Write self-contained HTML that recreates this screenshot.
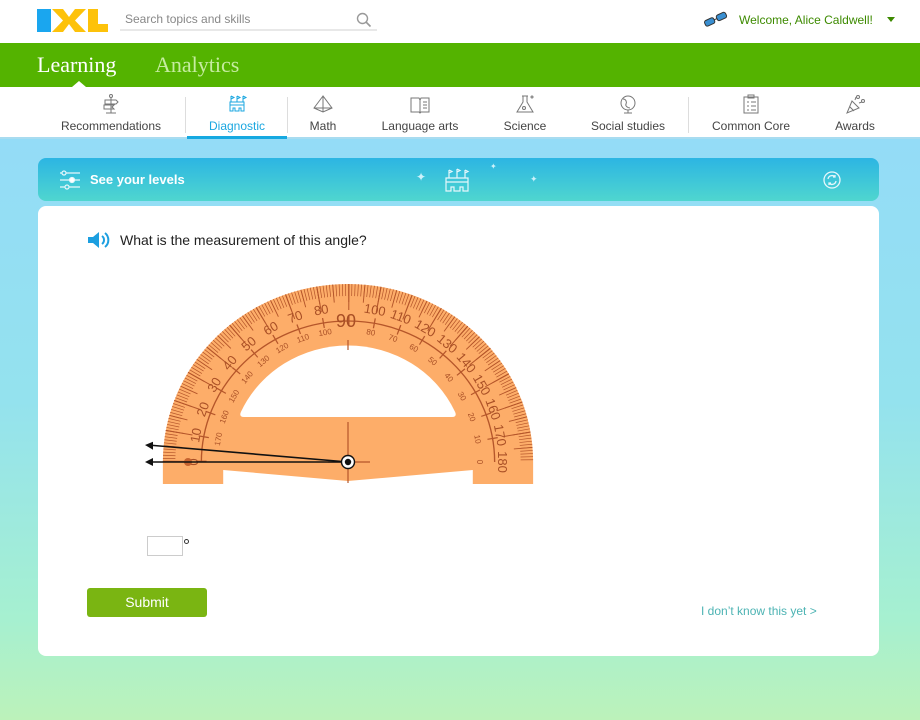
<!DOCTYPE html>
<html><head><meta charset="utf-8"><style>
*{margin:0;padding:0;box-sizing:border-box}
body{width:920px;height:720px;overflow:hidden;font-family:"Liberation Sans","DejaVu Sans",sans-serif;background:linear-gradient(#94dcf7 140px,#94e2ee 400px,#a6f0d0 620px,#bcf2ba 720px);position:relative}
.hdr{position:absolute;left:0;top:0;width:920px;height:43px;background:#fff}
.green{position:absolute;left:0;top:43px;width:920px;height:44px;background:#54b300}
.green span{position:absolute;top:9px;font-family:"Liberation Serif","DejaVu Serif",serif;font-size:22px}
.nav{position:absolute;left:0;top:87px;width:920px;height:52px;background:#fff;border-bottom:2px solid #a9dcf0}
.ni{position:absolute;top:32px;font-size:12px;color:#444;transform:translateX(-50%);white-space:nowrap}
.ic{position:absolute;top:7px;transform:translateX(-50%)}
.sep{position:absolute;top:10px;width:1px;height:36px;background:#ddd}
.banner{position:absolute;left:38px;top:158px;width:841px;height:43px;border-radius:8px;background:linear-gradient(#2cb5e3,#4fd6cf)}
.card{position:absolute;left:38px;top:206px;width:841px;height:450px;border-radius:8px;background:#fff}
</style></head><body>
<div class="hdr">
 <div style="position:absolute;left:37px;top:9px;width:14px;height:23px;background:#1aa6ef"></div>
 <svg style="position:absolute;left:50px;top:9px" width="58" height="23"><path d="M2 0h11l6 8 6-8h11L25 11.5 36 23H25l-6-8-6 8H2l11-11.5z" fill="#fdc20a"/><path d="M38 0h10v15h10v8H38z" fill="#fdc20a"/></svg>
 <div style="position:absolute;left:120px;top:9px;width:257px;height:22px;border-bottom:2px solid #e8e8e8;font-size:12px;color:#888;padding-left:5px;line-height:20px">Search topics and skills
  <svg style="position:absolute;right:5px;top:3px" width="16" height="16"><circle cx="6.5" cy="6.5" r="5" fill="none" stroke="#999" stroke-width="1.4"/><line x1="10" y1="10" x2="14.5" y2="14.5" stroke="#999" stroke-width="1.6"/></svg></div>
 <svg style="position:absolute;left:703px;top:10px" width="26" height="18"><g transform="rotate(-25 13 9)"><rect x="1" y="6" width="10" height="6" rx="2" fill="#3a8fd1" stroke="#333"/><rect x="14" y="6" width="10" height="6" rx="2" fill="#3a8fd1" stroke="#333"/><line x1="11" y1="9" x2="14" y2="9" stroke="#333"/></g></svg>
 <div style="position:absolute;left:739px;top:13px;font-size:12px;color:#3d8a00">Welcome, Alice Caldwell!</div>
 <div style="position:absolute;left:887px;top:17px;border-left:4px solid transparent;border-right:4px solid transparent;border-top:5px solid #3d8a00"></div>
</div>
<div class="green"><span style="left:37px;color:#fff">Learning</span><span style="left:155px;color:#c6eca0">Analytics</span>
 <div style="position:absolute;left:72px;top:38px;border-left:7px solid transparent;border-right:7px solid transparent;border-bottom:6px solid #fff"></div></div>
<div class="nav">
 <div class="sep" style="left:185px"></div><div class="sep" style="left:287px"></div><div class="sep" style="left:688px"></div>
 <svg class="ic" style="left:111px" width="22" height="20" fill="none" stroke="#777"><circle cx="11" cy="2" r="1.5"/><path d="M11 4v15M5 6h11l2 2-2 2H5zM4 11h10l-2 2 2 2H4z"/><path d="M6 19h10"/></svg>
 <svg class="ic" style="left:237px" width="22" height="20" fill="none" stroke="#1ba7e0"><path d="M4 8h14v9h-3v-3h-2v3h-4v-3H7v3H4zM4 11h14M5 2v6M11 2v6M17 2v6M5 2l3 1.5-3 1.5M11 2l3 1.5-3 1.5M17 2l3 1.5-3 1.5"/></svg>
 <svg class="ic" style="left:323px" width="22" height="20" fill="none" stroke="#777"><path d="M11 2L2 14l9 4 9-4zM11 2v16M2 14h18"/></svg>
 <svg class="ic" style="left:420px" width="22" height="20" fill="none" stroke="#777"><path d="M2 4h8l1 2 1-2h8v14h-8l-1 1-1-1H2zM11 6v13M14 8h4M14 11h4M14 14h4"/></svg>
 <svg class="ic" style="left:525px" width="22" height="20" fill="none" stroke="#777"><path d="M8 2h6M9 2v6L3 18h16L13 8V2"/><circle cx="10" cy="14" r="1.5"/><circle cx="18" cy="3" r="1"/></svg>
 <svg class="ic" style="left:628px" width="22" height="20" fill="none" stroke="#777"><circle cx="11" cy="9" r="7"/><path d="M6 5c3 0 4 3 3 5s2 4 4 4M11 16v3M7 19h8"/></svg>
 <svg class="ic" style="left:751px" width="22" height="20" fill="none" stroke="#777"><rect x="4" y="3" width="14" height="16"/><rect x="8" y="1" width="6" height="3"/><path d="M7 8h2M11 8h5M7 12h2M11 12h5M7 16h2M11 16h5"/></svg>
 <svg class="ic" style="left:855px" width="22" height="20" fill="none" stroke="#777"><path d="M3 19l5-12 7 7zM6 13l4 4"/><circle cx="14" cy="3" r="1.5"/><circle cx="19" cy="7" r="1.5"/><path d="M11 6l1-3M15 9l3-1"/></svg>
 <div class="ni" style="left:111px">Recommendations</div>
 <div class="ni" style="left:237px;color:#1ba7e0">Diagnostic</div>
 <div class="ni" style="left:323px">Math</div>
 <div class="ni" style="left:420px">Language arts</div>
 <div class="ni" style="left:525px">Science</div>
 <div class="ni" style="left:628px">Social studies</div>
 <div class="ni" style="left:751px">Common Core</div>
 <div class="ni" style="left:855px">Awards</div>
 <div style="position:absolute;left:187px;top:49px;width:100px;height:3px;background:#16a9e1"></div>
</div>
<div class="banner">
 <svg style="position:absolute;left:21px;top:12px" width="22" height="20" fill="none" stroke="#e6f7fb" stroke-width="1.2"><path d="M1 3h20M1 10h20M1 17h20"/><circle cx="5" cy="3" r="2" fill="#3ac0df"/><circle cx="13" cy="10" r="2.5" fill="#fff"/><circle cx="8" cy="17" r="2" fill="#46cbd9"/></svg>
 <div style="position:absolute;left:52px;top:14px;color:#fff;font-size:13px;font-weight:bold">See your levels</div>
 <div style="position:absolute;left:378px;top:12px;color:#cdf2fb;font-size:12px">✦</div>
 <div style="position:absolute;left:452px;top:4px;color:#cdf2fb;font-size:8px">✦</div>
 <div style="position:absolute;left:492px;top:16px;color:#cdf2fb;font-size:9px">✦</div>
 <svg style="position:absolute;left:406px;top:8px" width="26" height="28" fill="none" stroke="#e6f7fb" stroke-width="1.2"><path d="M2 12h22v13h-5v-4h-3v4h-6v-4H7v4H2zM2 16h22M5 4v8M13 3v9M21 4v8M5 4l3 1.5-3 1.5M13 3l3 1.5-3 1.5M21 4l3 1.5-3 1.5"/></svg>
 <svg style="position:absolute;left:784px;top:12px" width="20" height="20" fill="none" stroke="#e6f7fb" stroke-width="1.3"><circle cx="10" cy="10" r="8"/><path d="M6 9a4 4 0 0 1 7-2M14 11a4 4 0 0 1-7 2M13 5v2h-2M7 15v-2h2"/></svg>
</div>
<div class="card">
 <svg style="position:absolute;left:49px;top:24px" width="26" height="20"><path d="M1 7h5l6-5v16l-6-5H1z" fill="#1c9fe0"/><path d="M15 6a5 5 0 0 1 0 8M18 3a9 9 0 0 1 0 14" fill="none" stroke="#1c9fe0" stroke-width="2"/></svg>
 <div style="position:absolute;left:82px;top:26px;font-size:14px;color:#222">What is the measurement of this angle?</div>
 <div style="position:absolute;left:109px;top:330px;width:36px;height:20px;border:1px solid #ccc"></div>
 <div style="position:absolute;left:146px;top:333px;width:5px;height:5px;border:1.3px solid #333;border-radius:50%"></div>
 <div style="position:absolute;left:49px;top:382px;width:120px;height:29px;background:#7ab512;border-radius:3px;color:#fff;font-size:14px;text-align:center;line-height:29px">Submit</div>
 <div style="position:absolute;left:663px;top:398px;font-size:12px;color:#4cb3b3">I don’t know this yet &gt;</div>
</div>
<svg style="position:absolute;left:0;top:0" width="920" height="720">
 <defs><clipPath id="up"><rect x="0" y="0" width="920" height="462"/></clipPath></defs>
 <g transform="translate(348 462) scale(1.04 1) translate(-348 -462)">
  <path d="M170 462A178 178 0 0 1 526 462V484H468V470L348 481L228 470V484H170Z" fill="#fdad69"/>
  <path d="M248 417L448 417Q453 417 451 412A113 113 0 0 0 245 412Q243 417 248 417Z" fill="#fff"/>
  <g clip-path="url(#up)" fill="none" stroke="#b5562a">
   <circle cx="348" cy="462" r="172" stroke-width="12" stroke-dasharray="0.7 2.302"/>
   <circle cx="348" cy="462" r="169" stroke-width="18" stroke-dasharray="0.9 13.848"/>
   <circle cx="348" cy="462" r="165" stroke-width="26" stroke-dasharray="1 27.798"/>
   <circle cx="348" cy="462" r="141" stroke-width="1.3"/>
   <circle cx="348" cy="462" r="141" stroke-width="10" stroke-dasharray="1.2 23.409"/>
  </g>
 </g>
 <g fill="#a94f25" font-family="Liberation Sans,sans-serif" font-size="13" text-anchor="middle">
  <text x="348" y="312" transform="rotate(-90 348 462)">0</text>
  <text x="348" y="312" transform="rotate(-80 348 462)">10</text>
  <text x="348" y="312" transform="rotate(-70 348 462)">20</text>
  <text x="348" y="312" transform="rotate(-60 348 462)">30</text>
  <text x="348" y="312" transform="rotate(-50 348 462)">40</text>
  <text x="348" y="312" transform="rotate(-40 348 462)">50</text>
  <text x="348" y="312" transform="rotate(-30 348 462)">60</text>
  <text x="348" y="312" transform="rotate(-20 348 462)">70</text>
  <text x="348" y="312" transform="rotate(-10 348 462)">80</text>
  <text x="346" y="327" font-size="18">90</text>
  <text x="348" y="312" transform="rotate(10 348 462)">100</text>
  <text x="348" y="312" transform="rotate(20 348 462)">110</text>
  <text x="348" y="312" transform="rotate(30 348 462)">120</text>
  <text x="348" y="312" transform="rotate(40 348 462)">130</text>
  <text x="348" y="312" transform="rotate(50 348 462)">140</text>
  <text x="348" y="312" transform="rotate(60 348 462)">150</text>
  <text x="348" y="312" transform="rotate(70 348 462)">160</text>
  <text x="348" y="312" transform="rotate(80 348 462)">170</text>
  <text x="348" y="312" transform="rotate(90 348 462)">180</text>
 </g>
 <g fill="#a94f25" font-family="Liberation Sans,sans-serif" font-size="8" text-anchor="middle">
  <text x="348" y="333" transform="rotate(-80 348 462)">170</text>
  <text x="348" y="333" transform="rotate(-70 348 462)">160</text>
  <text x="348" y="333" transform="rotate(-60 348 462)">150</text>
  <text x="348" y="333" transform="rotate(-50 348 462)">140</text>
  <text x="348" y="333" transform="rotate(-40 348 462)">130</text>
  <text x="348" y="333" transform="rotate(-30 348 462)">120</text>
  <text x="348" y="333" transform="rotate(-20 348 462)">110</text>
  <text x="348" y="333" transform="rotate(-10 348 462)">100</text>
  <text x="348" y="333" transform="rotate(10 348 462)">80</text>
  <text x="348" y="333" transform="rotate(20 348 462)">70</text>
  <text x="348" y="333" transform="rotate(30 348 462)">60</text>
  <text x="348" y="333" transform="rotate(40 348 462)">50</text>
  <text x="348" y="333" transform="rotate(50 348 462)">40</text>
  <text x="348" y="333" transform="rotate(60 348 462)">30</text>
  <text x="348" y="333" transform="rotate(70 348 462)">20</text>
  <text x="348" y="333" transform="rotate(80 348 462)">10</text>
  <text x="348" y="333" transform="rotate(90 348 462)">0</text>
 </g>
 <g stroke="#b5562a" stroke-width="1.2"><line x1="348" y1="422" x2="348" y2="483"/><line x1="328" y1="462" x2="370" y2="462"/><line x1="348" y1="340" x2="348" y2="350"/></g>
 <circle cx="188" cy="462" r="4" fill="#c6622f"/>
 <g stroke="#111" stroke-width="1.6"><line x1="148" y1="462" x2="348" y2="462"/><line x1="148" y1="445" x2="348" y2="462"/></g>
 <path d="M145 462l8-4v8z" fill="#111"/><path d="M145 445l8-3.3v8z" fill="#111"/>
 <circle cx="348" cy="462" r="6.5" fill="#fff" stroke="#111" stroke-width="1.4"/><circle cx="348" cy="462" r="3.2" fill="#111"/>
</svg>
</body></html>
